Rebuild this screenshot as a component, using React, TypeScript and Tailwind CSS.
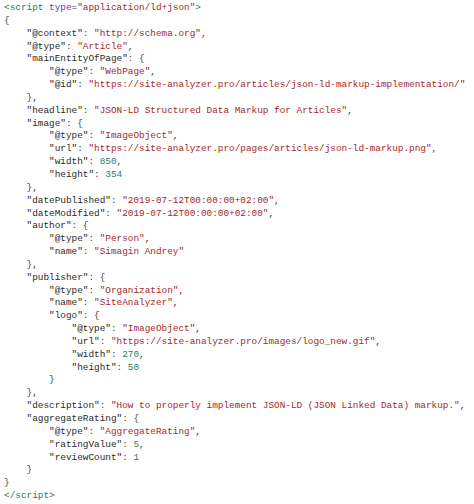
type Tok = { t: string; c?: "k" | "s" | "n" | "p" | "tag" | "attr" };

const K = (t: string): Tok => ({ t, c: "k" });
const S = (t: string): Tok => ({ t, c: "s" });
const N = (t: string): Tok => ({ t, c: "n" });
const P = (t: string): Tok => ({ t, c: "p" });

const pad = (n: number) => P(" ".repeat(n * 4));

const lines: Tok[][] = [
  [{ t: "<script", c: "tag" }, P(" "), { t: "type", c: "attr" }, P("="), S('"application/ld+json"'), { t: ">", c: "tag" }],
  [P("{")],
  [pad(1), K('"@context"'), P(": "), S('"http://schema.org"'), P(",")],
  [pad(1), K('"@type"'), P(": "), S('"Article"'), P(",")],
  [pad(1), K('"mainEntityOfPage"'), P(": {")],
  [pad(2), K('"@type"'), P(": "), S('"WebPage"'), P(",")],
  [pad(2), K('"@id"'), P(": "), S('"https://site-analyzer.pro/articles/json-ld-markup-implementation/"')],
  [pad(1), P("},")],
  [pad(1), K('"headline"'), P(": "), S('"JSON-LD Structured Data Markup for Articles"'), P(",")],
  [pad(1), K('"image"'), P(": {")],
  [pad(2), K('"@type"'), P(": "), S('"ImageObject"'), P(",")],
  [pad(2), K('"url"'), P(": "), S('"https://site-analyzer.pro/pages/articles/json-ld-markup.png"'), P(",")],
  [pad(2), K('"width"'), P(": "), N("850"), P(",")],
  [pad(2), K('"height"'), P(": "), N("354")],
  [pad(1), P("},")],
  [pad(1), K('"datePublished"'), P(": "), S('"2019-07-12T00:00:00+02:00"'), P(",")],
  [pad(1), K('"dateModified"'), P(": "), S('"2019-07-12T00:00:00+02:00"'), P(",")],
  [pad(1), K('"author"'), P(": {")],
  [pad(2), K('"@type"'), P(": "), S('"Person"'), P(",")],
  [pad(2), K('"name"'), P(": "), S('"Simagin Andrey"')],
  [pad(1), P("},")],
  [pad(1), K('"publisher"'), P(": {")],
  [pad(2), K('"@type"'), P(": "), S('"Organization"'), P(",")],
  [pad(2), K('"name"'), P(": "), S('"SiteAnalyzer"'), P(",")],
  [pad(2), K('"logo"'), P(": {")],
  [pad(3), K('"@type"'), P(": "), S('"ImageObject"'), P(",")],
  [pad(3), K('"url"'), P(": "), S('"https://site-analyzer.pro/images/logo_new.gif"'), P(",")],
  [pad(3), K('"width"'), P(": "), N("270"), P(",")],
  [pad(3), K('"height"'), P(": "), N("50")],
  [pad(2), P("}")],
  [pad(1), P("},")],
  [pad(1), K('"description"'), P(": "), S('"How to properly implement JSON-LD (JSON Linked Data) markup."'), P(",")],
  [pad(1), K('"aggregateRating"'), P(": {")],
  [pad(2), K('"@type"'), P(": "), S('"AggregateRating"'), P(",")],
  [pad(2), K('"ratingValue"'), P(": "), N("5"), P(",")],
  [pad(2), K('"reviewCount"'), P(": "), N("1")],
  [pad(1), P("}")],
  [P("}")],
  [{ t: "</script>", c: "tag" }],
];

const colour: Record<string, string> = {
  k: "text-[#2a2a2a]",
  s: "text-[#a3282a]",
  n: "text-[#2f7d5c]",
  p: "text-[#444444]",
  tag: "text-[#2e7c54]",
  attr: "text-[#5b3fb0]",
};

export default function App() {
  return (
    <div className="h-[504px] w-[474px] overflow-hidden bg-white pl-[4px] pt-[2px]">
      <div
        className="whitespace-pre text-[9.4px] leading-[12.85px]"
        style={{ fontFamily: '"Liberation Mono", "Courier New", monospace' }}
      >
        {lines.map((line, i) => (
          <div key={i} className="h-[12.85px]">
            {line.map((tok, j) => (
              <span key={j} className={colour[tok.c ?? "p"]}>
                {tok.t}
              </span>
            ))}
          </div>
        ))}
      </div>
    </div>
  );
}
